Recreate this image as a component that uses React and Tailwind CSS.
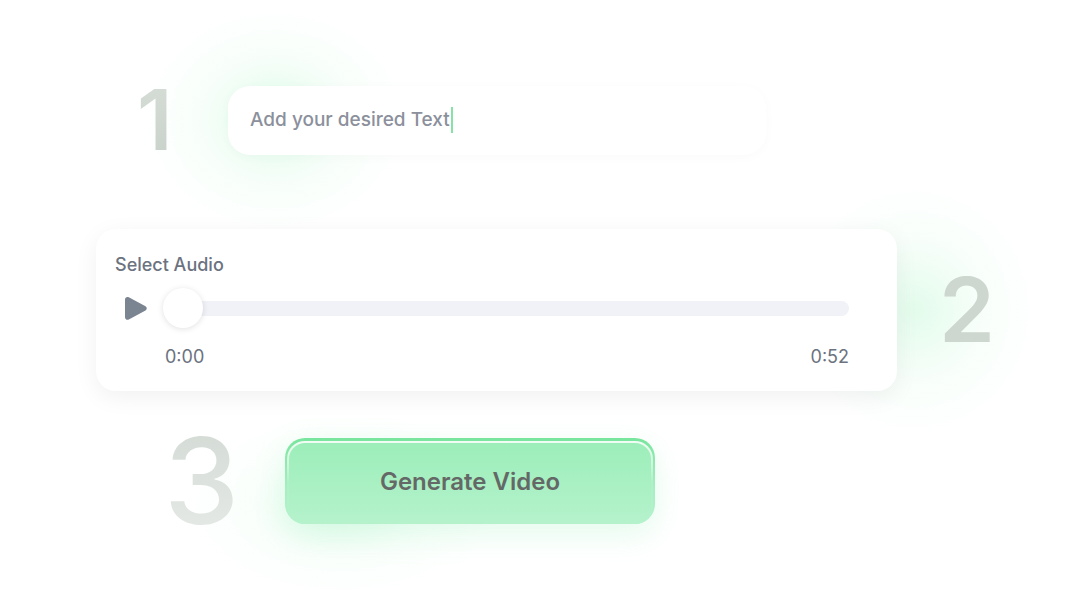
export default function App() {
  return (
    <div className="relative w-[1080px] h-[615px] bg-white overflow-hidden" style={{ fontFamily: "Inter, 'Noto Sans', sans-serif" }}>
      {/* glows */}
      <div className="absolute left-[140px] top-[5px] w-[270px] h-[230px] rounded-full bg-[radial-gradient(closest-side,rgba(187,247,208,0.5),rgba(220,252,231,0.22)_55%,transparent)]" />
      <div className="absolute left-[790px] top-[180px] w-[250px] h-[260px] rounded-full bg-[radial-gradient(closest-side,rgba(187,247,208,0.42),rgba(220,252,231,0.2)_55%,transparent)]" />
      <div className="absolute left-[180px] top-[410px] w-[320px] h-[190px] rounded-full bg-[radial-gradient(closest-side,rgba(187,247,208,0.4),rgba(220,252,231,0.16)_55%,transparent)]" />

      <div className="relative flex flex-col pt-[78px]">
        {/* Row 1 */}
        <div className="flex items-center pl-[137px]">
          <div className="w-[91px] text-[84px] leading-none font-semibold bg-gradient-to-b from-[#d6ddd7] to-[#c9d1cb] bg-clip-text text-transparent">1</div>
          <div className="w-[538px] h-[69px] rounded-[22px] bg-white shadow-[0_2px_12px_rgba(0,0,0,0.025)] flex items-center pl-[22px]">
            <span className="text-[19px] font-medium text-[#8b909c]">Add your desired Text</span>
            <span className="ml-[1px] w-[2px] h-[26px] bg-[#86e3a5]" />
          </div>
        </div>

        {/* Row 2 */}
        <div className="flex items-center mt-[67px] pl-[96px]">
          <div className="w-[801px] h-[162px] rounded-[20px] bg-white shadow-[0_6px_24px_rgba(0,0,0,0.06)] flex flex-col pl-[19px] pr-[48px] pt-[25px]">
            <div className="text-[18px] font-medium text-[#6b7280] leading-[22px]">Select Audio</div>
            <div className="flex items-center mt-[12px] h-[40px]">
              <svg width="28" height="28" viewBox="0 0 28 28" className="ml-[7px] shrink-0">
                <path d="M3 5.5 C3 3.4 5 2.3 6.8 3.3 L23.5 12.3 C25.2 13.2 25.2 15.6 23.5 16.5 L6.8 25.5 C5 26.5 3 25.4 3 23.3 Z" fill="#7b8491" />
              </svg>
              <div className="relative flex-1 ml-[13px] flex items-center">
                <div className="absolute left-[20px] right-0 h-[15px] rounded-full bg-[#f0f2f7]" />
                <div className="relative w-[40px] h-[40px] rounded-full bg-white shadow-[0_1px_6px_rgba(0,0,0,0.12)]" />
              </div>
            </div>
            <div className="flex justify-between mt-[18px] pl-[50px] text-[18px] text-[#6b7280] leading-[22px]">
              <span>0:00</span>
              <span>0:52</span>
            </div>
          </div>
          <div className="ml-[42px] text-[90px] leading-none font-semibold text-[#ced7cf]">2</div>
        </div>

        {/* Row 3 */}
        <div className="flex items-center mt-[30px] pl-[164px]">
          <div className="w-[121px] text-[120px] leading-none font-medium bg-gradient-to-b from-[#d3dad4] to-[#e6eae7] bg-clip-text text-transparent">3</div>
          <div className="w-[370px] h-[86px] rounded-[20px] pt-[3px] px-[2px] bg-gradient-to-b from-[#78e59d] via-[#a8efc2] via-60% to-[#b4f2cc] shadow-[0_10px_30px_rgba(134,239,172,0.22)]">
            <div className="w-full h-full rounded-t-[18px] rounded-b-[18px] pt-[2px] px-[2px] bg-gradient-to-b from-white/90 via-[#b0f0c8] via-50% to-[#b4f2cc]">
              <div className="w-full h-full rounded-t-[16px] rounded-b-[18px] bg-gradient-to-b from-[#9ceeb9] to-[#b5f2cc] flex items-center justify-center">
                <span className="text-[24px] font-semibold text-[#646866] -mt-[4px]">Generate Video</span>
              </div>
            </div>
          </div>
        </div>
      </div>
    </div>
  );
}
